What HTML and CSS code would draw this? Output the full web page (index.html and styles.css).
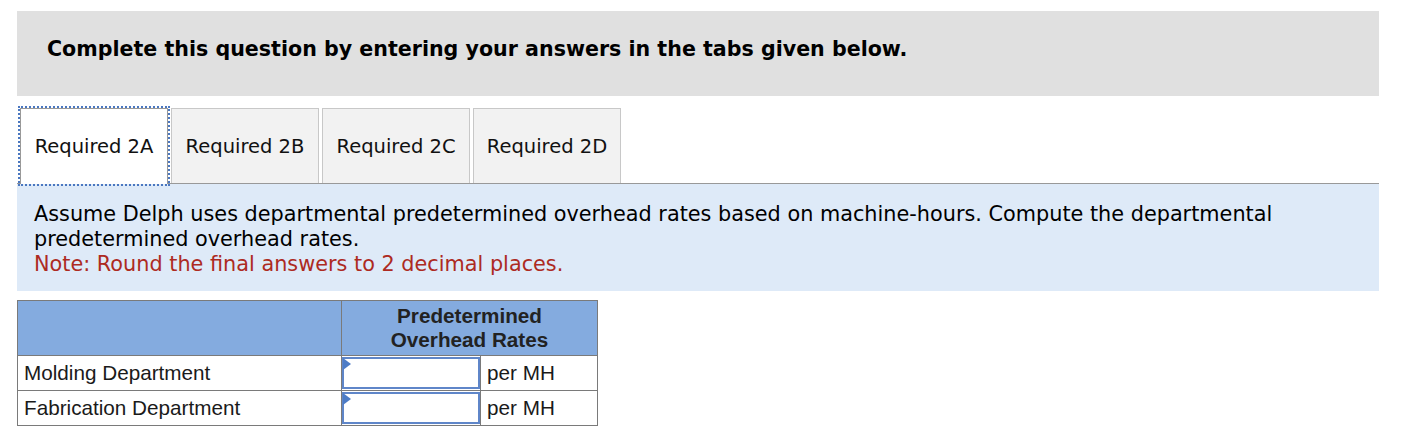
FILE: index.html
```html
<!DOCTYPE html>
<html>
<head>
<meta charset="utf-8">
<link rel="stylesheet" href="styles.css">
</head>
<body>
<div class="wrap">
  <div class="intro">Complete this question by entering your answers in the tabs given below.</div>
  <div class="tabs">
    <div class="tab active">Required 2A</div>
    <div class="tab">Required 2B</div>
    <div class="tab">Required 2C</div>
    <div class="tab">Required 2D</div>
  </div>
  <div class="panel">
    <p>Assume Delph uses departmental predetermined overhead rates based on machine-hours. Compute the departmental predetermined overhead rates.</p>
    <p class="note">Note: Round the final answers to 2 decimal places.</p>
  </div>
  <table class="grid">
    <tr class="head">
      <th class="c1"></th>
      <th colspan="2">Predetermined<br>Overhead Rates</th>
    </tr>
    <tr>
      <td class="label">Molding Department</td>
      <td class="inp"><div class="field"><span class="flag"></span></div></td>
      <td class="unit">per MH</td>
    </tr>
    <tr>
      <td class="label">Fabrication Department</td>
      <td class="inp"><div class="field"><span class="flag"></span></div></td>
      <td class="unit">per MH</td>
    </tr>
  </table>
</div>
</body>
</html>
```
FILE: styles.css
```css
html, body {
  margin: 0;
  padding: 0;
  background: #ffffff;
}
.wrap {
  padding: 11px 35px 0 17px;
  font-family: "DejaVu Sans", Verdana, sans-serif;
  color: #000;
}
.intro {
  background: #e0e0e0;
  height: 85px;
  box-sizing: border-box;
  padding: 0 0 10px 30px;
  display: flex;
  align-items: center;
  font-weight: bold;
  font-size: 20.6px;
}
.tabs {
  margin-top: 12px;
  display: flex;
  height: 75px;
  border-bottom: 1px solid #999;
}
.tab {
  width: 148px;
  box-sizing: border-box;
  margin-left: 3px;
  background: #f2f2f2;
  border: 1px solid #c8c8c8;
  border-bottom: none;
  display: flex;
  align-items: center;
  justify-content: center;
  font-size: 19.5px;
  color: #111;
}
.tab.active {
  background: #fff;
  border-color: #999;
  height: 76px;
  outline: 2px dotted #4a77c0;
  outline-offset: 0;
  position: relative;
  z-index: 1;
}
.panel {
  background: #deeaf8;
  padding: 18px 17px 14px;
  font-size: 20.8px;
  line-height: 25px;
}
.panel p {
  margin: 0;
}
.panel .note {
  color: #ad2a22;
}
.grid {
  margin-top: 9px;
  border-collapse: collapse;
  font-family: "Liberation Sans", Arial, sans-serif;
  font-size: 20.7px;
  color: #1a1a1a;
}
.grid th, .grid td {
  border: 1px solid #7a7a7a;
  padding: 0;
}
.head th {
  background: #84abdf;
  height: 54px;
  font-weight: bold;
  line-height: 24px;
  text-align: center;
  color: #222;
}
.grid .c1 {
  width: 323px;
}
.grid .label {
  width: 317px;
  padding-left: 6px;
  height: 34px;
}
.grid .inp {
  width: 138px;
  padding: 1px 0 0 0;
  vertical-align: top;
}
.field {
  position: relative;
  height: 32px;
  width: 138px;
  box-sizing: border-box;
  border: 2px solid #5f86c9;
  background: #fff;
}
.flag {
  position: absolute;
  left: -1px;
  top: -1px;
  width: 0;
  height: 0;
  border-top: 6px solid transparent;
  border-bottom: 6px solid transparent;
  border-left: 8px solid #4d7cc6;
}
.grid .unit {
  width: 110px;
  padding-left: 6px;
}
```
